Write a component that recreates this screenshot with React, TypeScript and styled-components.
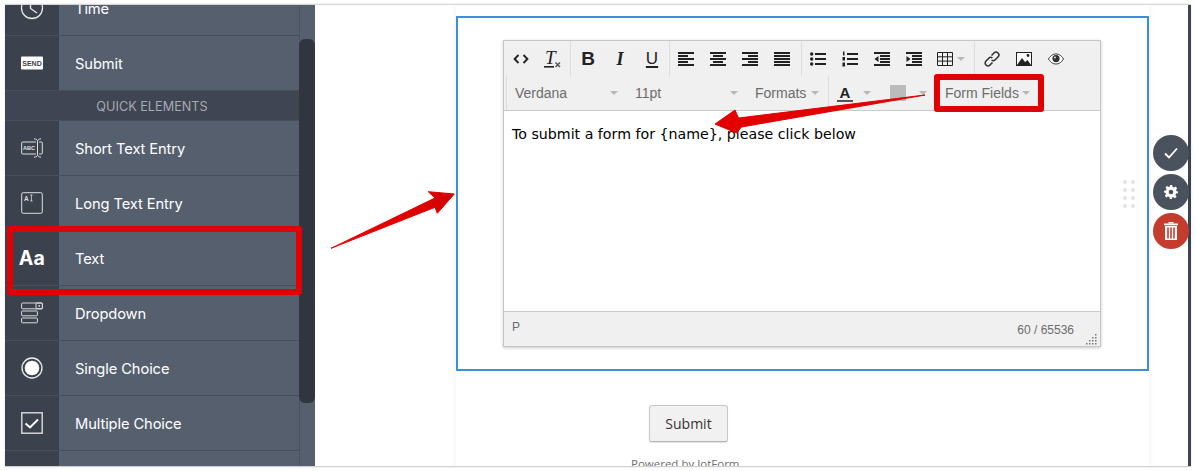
import React from "react";
import styled, { createGlobalStyle } from "styled-components";

const Global = createGlobalStyle`
  html, body { margin: 0; padding: 0; background: #fff; }
  body { font-family: "Liberation Sans", Arial, sans-serif; }
  * { box-sizing: border-box; }
`;

const Page = styled.div`
  position: relative;
  width: 1196px;
  height: 471px;
  padding: 4px 5px;
  background: #fff;
  overflow: hidden;
`;
const Frame = styled.div`
  position: relative;
  display: flex;
  height: 463px;
  border-top: 1px solid #d6d6d6;
  border-bottom: 1px solid #cfcfcf;
  box-shadow: 0 0 2px rgba(0, 0, 0, 0.12);
  overflow: hidden;
  background: #fff;
`;
const Sidebar = styled.aside`
  flex: 0 0 310px;
  display: flex;
  background: #565f6e;
`;
const List = styled.div`
  flex: 0 0 294px;
  margin-top: -24px;
`;
const Track = styled.div`
  flex: 0 0 16px;
  border-left: 1px solid #4b5361;
`;
const Thumb = styled.div`
  width: 16px;
  height: 364px;
  margin: 34px 0 0 -1px;
  border-radius: 6px;
  background: #31353e;
`;
const Row = styled.div`
  display: flex;
  height: 55px;
  border-bottom: 1px solid #474f5c;
`;
const IconCell = styled.div`
  flex: 0 0 54px;
  display: flex;
  align-items: center;
  justify-content: center;
  background: #3b424d;
  color: #fff;
`;
const RowLabel = styled.div`
  display: flex;
  align-items: center;
  padding: 2px 0 0 16px;
  font: 400 14.7px/1 Inter, "Liberation Sans", sans-serif;
  letter-spacing: -0.1px;
  color: #fff;
`;
const SectionTitle = styled.div`
  height: 30px;
  display: flex;
  align-items: center;
  justify-content: center;
  padding-top: 3px;
  background: #3f4552;
  border-bottom: 1px solid #474f5c;
  font: 400 12.7px/1 Inter, "Liberation Sans", sans-serif;
  color: #a6aab1;
`;
const AaMark = styled.span`
  padding-top: 2px;
  font: 700 19.5px/1 Inter, "Liberation Sans", sans-serif;
  letter-spacing: 0.4px;
  color: #fff;
`;

const Canvas = styled.main`
  flex: 1;
  min-width: 0;
  padding-left: 141px;
  background: #fff;
`;
const FormPanel = styled.section`
  width: 693px;
  height: 100%;
  padding-top: 11px;
  background: #fff;
  box-shadow: 0 0 6px rgba(0, 0, 0, 0.07);
`;
const Selected = styled.div`
  position: relative;
  height: 355px;
  padding: 22px 45px;
  border: 2px solid #3d8fdb;
`;
const Editor = styled.div`
  width: 598px;
  height: 307px;
  display: flex;
  flex-direction: column;
  border: 1px solid #c6c6c6;
  background: #f0f0f0;
  box-shadow: 0 1px 3px rgba(0, 0, 0, 0.22);
`;
const Toolbar = styled.div`
  flex: 0 0 70px;
  border-bottom: 1px solid #c9c9c9;
`;
const ToolRow = styled.div<{ $h: number }>`
  display: flex;
  height: ${(p) => p.$h}px;
`;
const Group = styled.div<{ $l: number; $r: number; $last?: boolean }>`
  display: flex;
  align-items: center;
  padding: 0 ${(p) => p.$r}px 0 ${(p) => p.$l}px;
  border-right: ${(p) => (p.$last ? "none" : "1px solid #dcdcdc")};
`;
const Btn = styled.div<{ $w?: number }>`
  flex: 0 0 ${(p) => p.$w ?? 32}px;
  height: 30px;
  display: flex;
  align-items: center;
  justify-content: center;
  gap: 4px;
  color: #222;
`;
const BoldGlyph = styled.span`
  font: 700 19px/1 "Liberation Sans", sans-serif;
  color: #222;
`;
const ItalicGlyph = styled.span`
  font: italic 700 18px/1 "Liberation Serif", serif;
  color: #222;
`;
const UnderGlyph = styled.span`
  font: 400 17px/1 "Liberation Sans", sans-serif;
  text-decoration: underline;
  text-decoration-thickness: 2px;
  text-underline-offset: 2px;
  color: #222;
`;
const Caret = styled.i`
  flex: none;
  display: block;
  width: 0;
  height: 0;
  border-left: 4px solid transparent;
  border-right: 4px solid transparent;
  border-top: 4px solid #b8b8b8;
`;
const Select = styled.div<{ $w: number; $sep?: boolean; $pad?: number }>`
  flex: 0 0 ${(p) => p.$w}px;
  display: flex;
  align-items: center;
  justify-content: space-between;
  padding: 0 9px 0 ${(p) => p.$pad ?? 8}px;
  font-size: 14px;
  white-space: nowrap;
  color: #6c6c6c;
  border-left: ${(p) => (p.$sep ? "1px solid #dcdcdc" : "none")};
`;
const Gap = styled.div`
  flex: 0 0 2px;
`;
const ColorBtn = styled.div<{ $w: number; $sep?: boolean }>`
  flex: 0 0 ${(p) => p.$w}px;
  display: flex;
  align-items: center;
  justify-content: space-between;
  padding-right: 4px;
  border-left: ${(p) => (p.$sep ? "1px solid #dcdcdc" : "none")};
`;
const ColorA = styled.span`
  display: block;
  width: 16px;
  margin-left: 8px;
  border-bottom: 2px solid #555;
  font: 700 15px/15px "Liberation Sans", sans-serif;
  text-align: center;
  color: #222;
`;
const Swatch = styled.span`
  display: block;
  width: 16px;
  height: 16px;
  margin-left: 15px;
  background: #bbb;
`;
const Body = styled.div`
  flex: 1;
  padding: 14px 8px;
  background: #fff;
  font: 400 14.2px/18px "DejaVu Sans", Verdana, sans-serif;
  color: #000;
`;
const Status = styled.div`
  position: relative;
  flex: 0 0 35px;
  display: flex;
  justify-content: space-between;
  padding: 8px 26px 0 8px;
  border-top: 1px solid #c9c9c9;
  font-size: 12px;
  color: #6c6c6c;
`;
const Count = styled.span`
  margin-top: 3px;
`;
const Grip = styled.svg`
  position: absolute;
  right: 2px;
  bottom: 1px;
`;
const SubmitBtn = styled.button`
  display: block;
  width: 79px;
  height: 37px;
  margin: 34px 0 0 193px;
  border: 1px solid #c8c8c8;
  border-bottom-color: #b5b5b5;
  border-radius: 3px;
  background: #f1f1f1;
  font: 400 14px/1 "Open Sans", sans-serif;
  color: #333;
  box-shadow: 0 1px 1px rgba(0, 0, 0, 0.12);
`;
const Powered = styled.div`
  margin: 15px 0 0 175px;
  font: 400 11.5px/14px "Open Sans", sans-serif;
  color: #6f6f6f;
`;
const Strip = styled.div`
  flex: 0 0 3px;
  background: #3b4350;
`;
const Handle = styled.div`
  position: absolute;
  top: 162px;
  left: 665px;
  display: grid;
  grid-template-columns: 4px 4px;
  gap: 4px;
`;
const Dot = styled.span`
  width: 4px;
  height: 4px;
  border-radius: 50%;
  background: #e2e2e2;
`;
const Actions = styled.div`
  position: absolute;
  top: 117px;
  left: 695px;
  display: flex;
  flex-direction: column;
  gap: 3px;
  z-index: 3;
`;
const Round = styled.div<{ $danger?: boolean }>`
  width: 36px;
  height: 36px;
  display: flex;
  align-items: center;
  justify-content: center;
  border-radius: 50%;
  background: ${(p) => (p.$danger ? "#c33c2e" : "#4a525e")};
  color: #fff;
`;
const Highlight = styled.div<{ $x: number; $y: number; $w: number; $h: number }>`
  position: absolute;
  left: ${(p) => p.$x}px;
  top: ${(p) => p.$y}px;
  width: ${(p) => p.$w}px;
  height: ${(p) => p.$h}px;
  border: 6px solid #e30000;
  border-radius: 3px;
  z-index: 5;
`;
const Arrows = styled.svg`
  position: absolute;
  inset: 0;
  z-index: 6;
  pointer-events: none;
`;

const Lines = ({ rows }: { rows: [number, number][] }) => (
  <svg width="16" height="14" viewBox="0 0 16 14" fill="#222">
    {rows.map(([x, w], i) => (
      <rect key={i} x={x} y={i * 3} width={w} height="2" />
    ))}
  </svg>
);

const Code = () => (
  <svg width="16" height="12" viewBox="0 0 16 12" fill="none" stroke="#222" strokeWidth="1.9">
    <path d="M5.500 2 1.600 6l3.900 4M10.500 2l3.900 4-3.900 4" />
  </svg>
);
const ClearFmt = () => (
  <svg width="18" height="24" viewBox="0 0 18 24">
    <text x="1" y="17" fontFamily="Liberation Serif, serif" fontStyle="italic" fontSize="19" fill="#222">T</text>
    <rect x="0" y="19" width="10" height="1.600" fill="#222" />
    <path d="M11.500 15.500l4.500 4.500M16 15.500 11.500 20" stroke="#555" strokeWidth="1.500" />
  </svg>
);
const Bullets = () => (
  <svg width="16" height="14" viewBox="0 0 16 14" fill="#222">
    <circle cx="1.700" cy="2" r="1.700" /><circle cx="1.700" cy="7" r="1.700" /><circle cx="1.700" cy="12" r="1.700" />
    <rect x="5" y="1" width="11" height="2" /><rect x="5" y="6" width="11" height="2" /><rect x="5" y="11" width="11" height="2" />
  </svg>
);
const Numbers = () => (
  <svg width="16" height="16" viewBox="0 0 16 16" fill="#222">
    <rect x="1" y=".5" width="1.500" height="4" /><rect x=".5" y="6" width="2.500" height="3.500" /><rect x=".5" y="11.500" width="2.500" height="4" />
    <rect x="5" y="2" width="11" height="2" /><rect x="5" y="7" width="11" height="2" /><rect x="5" y="12" width="11" height="2" />
  </svg>
);
const Indent = ({ out }: { out?: boolean }) => (
  <svg width="16" height="14" viewBox="0 0 16 14" fill="#222">
    <rect x="0" y="0" width="16" height="2" /><rect x="6" y="3" width="10" height="2" /><rect x="6" y="6" width="10" height="2" />
    <rect x="6" y="9" width="10" height="2" /><rect x="0" y="12" width="16" height="2" />
    <path d={out ? "M4.500 4v6L.5 7z" : "M.5 4v6l4-3z"} />
  </svg>
);
const TableIco = () => (
  <svg width="16" height="14" viewBox="0 0 16 14" fill="none" stroke="#222" strokeWidth="1">
    <path d="M.5.5h15v13H.5zM.5 4.800h15M.5 9.100h15M5.500.5v13M10.500.5v13" />
  </svg>
);
const LinkIco = () => (
  <svg width="18" height="18" viewBox="0 0 18 18" fill="none" stroke="#333" strokeWidth="1.600">
    <path d="M8.500 5.500 11 3a2.800 2.800 0 0 1 4 4l-2.800 2.800a2.800 2.800 0 0 1-3.600.3" />
    <path d="M9.500 12.500 7 15a2.800 2.800 0 0 1-4-4l2.800-2.800a2.800 2.800 0 0 1 3.600-.3" />
  </svg>
);
const ImageIco = () => (
  <svg width="16" height="14" viewBox="0 0 16 14">
    <rect x=".5" y=".5" width="15" height="13" fill="#fff" stroke="#222" />
    <path d="M1 13 6 6l3 4 2.500-2L15 13z" fill="#222" />
    <circle cx="12" cy="3.500" r="1.400" fill="#222" />
  </svg>
);
const EyeIco = () => (
  <svg width="16" height="12" viewBox="0 0 16 12">
    <path d="M.5 6C3 2 5.500 1 8 1s5 1 7.500 5C13 10 10.500 11 8 11S3 10 .5 6z" fill="#fff" stroke="#333" />
    <circle cx="8" cy="5.600" r="3.600" fill="#333" />
    <circle cx="7" cy="4.600" r="1" fill="#ddd" />
  </svg>
);

const Clock = () => (
  <svg width="24" height="24" viewBox="0 0 24 24" fill="none" stroke="#e8e8e8" strokeWidth="1.300">
    <circle cx="12" cy="12" r="10.500" />
    <path d="M10.500 7v5.500L17 17" />
  </svg>
);
const SendIco = () => (
  <svg width="22" height="14" viewBox="0 0 22 14">
    <rect width="22" height="13" rx="1" y=".5" fill="#fff" />
    <text x="11" y="9.500" textAnchor="middle" fontFamily="Liberation Sans, sans-serif" fontWeight="700" fontSize="7" fill="#3b424d">SEND</text>
  </svg>
);
const ShortIco = () => (
  <svg width="22" height="20" viewBox="0 0 22 20" fill="none" stroke="#e0e0e0">
    <path d="M15 4H1.500a.8.8 0 0 0-.8.8v10.400a.8.8 0 0 0 .8.8H15M18 4h2.500a.8.8 0 0 1 .8.8v10.400a.8.8 0 0 1-.8.8H18" />
    <path d="M13 .8c2 0 3.500 1 3.500 2.500V16.700c0 1.500-1.500 2.500-3.500 2.500M20 .8c-2 0-3.500 1-3.500 2.500M20 19.200c-2 0-3.500-1-3.500-2.500" />
    <text x="8" y="12" textAnchor="middle" fontFamily="Liberation Sans, sans-serif" fontWeight="700" fontSize="5.600" fill="#e0e0e0" stroke="none">ABC</text>
  </svg>
);
const LongIco = () => (
  <svg width="22" height="22" viewBox="0 0 22 22" fill="none" stroke="#ddd">
    <rect x=".7" y=".7" width="20.600" height="20.600" rx="1.500" />
    <text x="3" y="8.500" fontFamily="Liberation Sans, sans-serif" fontWeight="700" fontSize="6.500" fill="#ddd" stroke="none">A</text>
    <path d="M9.200 3h2.400M10.400 3v6M9.200 9h2.400" strokeWidth=".8" />
  </svg>
);
const DropIco = () => (
  <svg width="22" height="22" viewBox="0 0 22 22" fill="none" stroke="#ddd">
    <rect x=".6" y="1" width="20.800" height="5.800" rx=".8" />
    <rect x="15" y="1" width="6.400" height="5.800" rx=".8" />
    <circle cx="18.200" cy="3.900" r=".9" fill="#ddd" stroke="none" />
    <rect x=".6" y="9" width="15.800" height="4.800" rx=".8" />
    <rect x=".6" y="16" width="15.800" height="4.800" rx=".8" />
  </svg>
);
const RadioIco = () => (
  <svg width="22" height="22" viewBox="0 0 22 22">
    <circle cx="11" cy="11" r="10" fill="none" stroke="#eee" strokeWidth="1.300" />
    <circle cx="11" cy="11" r="7.300" fill="#fff" />
  </svg>
);
const CheckIco = () => (
  <svg width="22" height="22" viewBox="0 0 22 22" fill="none">
    <rect x=".8" y=".8" width="20.400" height="20.400" stroke="#ddd" strokeWidth="1.400" />
    <path d="M4.500 11.500 9 15.500l8-8" stroke="#fff" strokeWidth="2" />
  </svg>
);
const Tick = () => (
  <svg width="14" height="12" viewBox="0 0 14 12" fill="none" stroke="#fff" strokeWidth="1.800">
    <path d="M1 6.500 5 10.500 13 1.500" />
  </svg>
);
const Gear = () => (
  <svg width="14" height="14" viewBox="0 0 24 24" fill="#fff">
    <path fillRule="evenodd" d="M10 0h4l.7 3.400 2.300 1 3-1.900L22.500 5.400l-1.900 3 1 2.300L24 11v3l-3.400.7-1 2.300 1.900 3-2.900 2.500-3-1.900-2.300 1L14 24h-4l-.7-3.400-2.300-1-3 1.900L1.500 18.600l1.900-3-1-2.300L0 13v-3l3.400-.7 1-2.300-1.900-3L5.400 1.500l3 1.900 2.300-1zM12 8a4 4 0 1 0 0 8 4 4 0 0 0 0-8z" />
  </svg>
);
const Trash = () => (
  <svg width="14" height="18" viewBox="0 0 14 18" fill="#fff">
    <rect x="0" y="1.500" width="14" height="1.800" />
    <rect x="4.500" y="0" width="5" height="1.500" />
    <path fillRule="evenodd" d="M1 4h12v14H1zM3.200 5.500v11H4.800v-11zM6.200 5.500v11H7.800v-11zM9.200 5.500v11h1.600v-11z" />
  </svg>
);

const items: { label: string; icon: React.ReactNode }[] = [
  { label: "Short Text Entry", icon: <ShortIco /> },
  { label: "Long Text Entry", icon: <LongIco /> },
  { label: "Text", icon: <AaMark>Aa</AaMark> },
  { label: "Dropdown", icon: <DropIco /> },
  { label: "Single Choice", icon: <RadioIco /> },
  { label: "Multiple Choice", icon: <CheckIco /> },
  { label: "", icon: null },
];
const dots = Array.from({ length: 8 });
const gripDots: [number, number][] = [[9, 1], [9, 4], [6, 4], [9, 7], [6, 7], [3, 7], [9, 10], [6, 10], [3, 10], [0, 10]];

export default function App() {
  return (
    <Page>
      <Global />
      <Frame>
        <Sidebar>
          <List>
            <Row><IconCell><Clock /></IconCell><RowLabel>Time</RowLabel></Row>
            <Row><IconCell><SendIco /></IconCell><RowLabel>Submit</RowLabel></Row>
            <SectionTitle>QUICK ELEMENTS</SectionTitle>
            {items.map((it, i) => (
              <Row key={i}><IconCell>{it.icon}</IconCell><RowLabel>{it.label}</RowLabel></Row>
            ))}
          </List>
          <Track><Thumb /></Track>
        </Sidebar>
        <Canvas>
          <FormPanel>
            <Selected>
              <Editor>
                <Toolbar>
                  <ToolRow $h={35}>
                    <Group $l={1} $r={1}>
                      <Btn><Code /></Btn>
                      <Btn><ClearFmt /></Btn>
                    </Group>
                    <Group $l={1} $r={1}>
                      <Btn><BoldGlyph>B</BoldGlyph></Btn>
                      <Btn><ItalicGlyph>I</ItalicGlyph></Btn>
                      <Btn><UnderGlyph>U</UnderGlyph></Btn>
                    </Group>
                    <Group $l={0} $r={3}>
                      <Btn><Lines rows={[[0, 16], [0, 10], [0, 16], [0, 10], [0, 16]]} /></Btn>
                      <Btn><Lines rows={[[0, 16], [3, 10], [0, 16], [3, 10], [0, 16]]} /></Btn>
                      <Btn><Lines rows={[[0, 16], [6, 10], [0, 16], [6, 10], [0, 16]]} /></Btn>
                      <Btn><Lines rows={[[0, 16], [0, 16], [0, 16], [0, 16], [0, 16]]} /></Btn>
                    </Group>
                    <Group $l={0} $r={2}>
                      <Btn><Bullets /></Btn>
                      <Btn><Numbers /></Btn>
                      <Btn><Indent out /></Btn>
                      <Btn><Indent /></Btn>
                      <Btn $w={42}><TableIco /><Caret /></Btn>
                    </Group>
                    <Group $l={1} $r={0} $last>
                      <Btn><LinkIco /></Btn>
                      <Btn><ImageIco /></Btn>
                      <Btn><EyeIco /></Btn>
                    </Group>
                  </ToolRow>
                  <ToolRow $h={34}>
                    <Gap />
                    <Select $w={121} $sep>Verdana<Caret /></Select>
                    <Select $w={120}>11pt<Caret /></Select>
                    <Select $w={81}>Formats<Caret /></Select>
                    <ColorBtn $w={47} $sep><ColorA>A</ColorA><Caret /></ColorBtn>
                    <ColorBtn $w={56}><Swatch /><Caret /></ColorBtn>
                    <Select $w={108} $pad={14}>Form Fields<Caret /></Select>
                  </ToolRow>
                </Toolbar>
                <Body>To submit a form for {"{name}"}, please click below</Body>
                <Status>
                  <span>P</span>
                  <Count>60 / 65536</Count>
                  <Grip width="12" height="12" viewBox="0 0 12 12" fill="#777">
                    {gripDots.map(([x, y], i) => <rect key={i} x={x} y={y} width="1.500" height="1.500" />)}
                  </Grip>
                </Status>
              </Editor>
              <Handle>{dots.map((_, i) => <Dot key={i} />)}</Handle>
              <Actions>
                <Round><Tick /></Round>
                <Round><Gear /></Round>
                <Round $danger><Trash /></Round>
              </Actions>
            </Selected>
            <SubmitBtn>Submit</SubmitBtn>
            <Powered>Powered by JotForm</Powered>
          </FormPanel>
        </Canvas>
        <Strip />
      </Frame>
      <Highlight $x={7} $y={226} $w={295} $h={69} />
      <Highlight $x={934} $y={74} $w={110} $h={38} />
      <Arrows width="1196" height="471" viewBox="0 0 1196 471">
        <defs>
          <linearGradient id="redA" x1="0" y1="1" x2="1" y2="0">
            <stop offset="0" stopColor="#f00000" />
            <stop offset="1" stopColor="#d40000" />
          </linearGradient>
        </defs>
        <path d="M331 248.300 435 198 428.300 191.700 454.300 194 437.300 213.300 435 207.300z" fill="url(#redA)" stroke="url(#redA)" strokeLinejoin="round" strokeWidth="1" />
        <path d="M925 95 738.500 118 735 110 715 124 736.500 133 741.500 127z" fill="#e30000" stroke="#e30000" strokeLinejoin="round" strokeWidth="1" />
      </Arrows>
    </Page>
  );
}
